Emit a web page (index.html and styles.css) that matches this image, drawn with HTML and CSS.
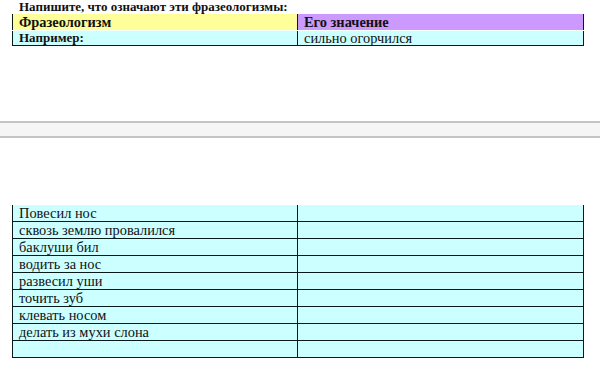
FILE: index.html
```html
<!DOCTYPE html>
<html lang="ru">
<head>
<meta charset="utf-8">
<link rel="stylesheet" href="styles.css">
</head>
<body>
<section class="top">
  <div class="title">Напишите, что означают эти фразеологизмы:</div>
  <table class="grid grid-head">
    <tr class="head">
      <td class="c1">Фразеологизм</td>
      <td class="c2">Его значение</td>
    </tr>
    <tr class="example">
      <td class="c1 b">Например:</td>
      <td class="c2">сильно огорчился</td>
    </tr>
  </table>
</section>
<div class="divider"></div>
<table class="grid grid-body">
  <tr><td class="c1">Повесил нос</td><td class="c2"></td></tr>
  <tr><td class="c1">сквозь землю провалился</td><td class="c2"></td></tr>
  <tr><td class="c1">баклуши бил</td><td class="c2"></td></tr>
  <tr><td class="c1">водить за нос</td><td class="c2"></td></tr>
  <tr><td class="c1">развесил уши</td><td class="c2"></td></tr>
  <tr><td class="c1">точить зуб</td><td class="c2"></td></tr>
  <tr><td class="c1">клевать носом</td><td class="c2"></td></tr>
  <tr><td class="c1">делать из мухи слона</td><td class="c2"></td></tr>
  <tr><td class="c1"></td><td class="c2"></td></tr>
</table>
</body>
</html>
```
FILE: styles.css
```css
html, body {
  margin: 0;
  padding: 0;
  background: #fff;
}
body {
  font-family: "Liberation Serif", "Times New Roman", serif;
  color: #111;
  width: 600px;
  height: 372px;
  overflow: hidden;
}
.top {
  height: 121px;
}
.title {
  font-weight: bold;
  font-size: 13px;
  line-height: 14px;
  height: 14px;
  padding-left: 19px;
  white-space: nowrap;
}
.grid {
  border-collapse: collapse;
  table-layout: fixed;
  width: 572px;
  margin-left: 12px;
}
.grid td {
  padding: 0 0 0 6px;
  border-left: 1px solid #0a1a1a;
  border-right: 1px solid #0a1a1a;
  font-size: 14.4px;
  line-height: 16px;
  height: 16px;
  white-space: nowrap;
  overflow: hidden;
}
.grid td.c1 {
  width: 278px;
}
.head td {
  font-weight: bold;
  border-bottom: 1px solid #f4fff8;
}
.head td.c1 { background: #ffff99; }
.head td.c2 { background: #cc99ff; }
.example td {
  background: #ccffff;
  height: 14px;
  line-height: 14px;
  border-bottom: 1px solid #0a1a1a;
}
.example td.b { font-weight: bold; font-size: 13px; }
.divider {
  height: 13px;
  background: #f5f5f5;
  border-top: 2px solid #c4c4c4;
  border-bottom: 2px solid #c4c4c4;
}
.grid-body {
  margin-top: 67px;
}
.grid-body td {
  background: #ccffff;
  border-bottom: 1px solid #0a1a1a;
  padding-top: 1px;
  height: 15px;
  line-height: 15px;
}
```
